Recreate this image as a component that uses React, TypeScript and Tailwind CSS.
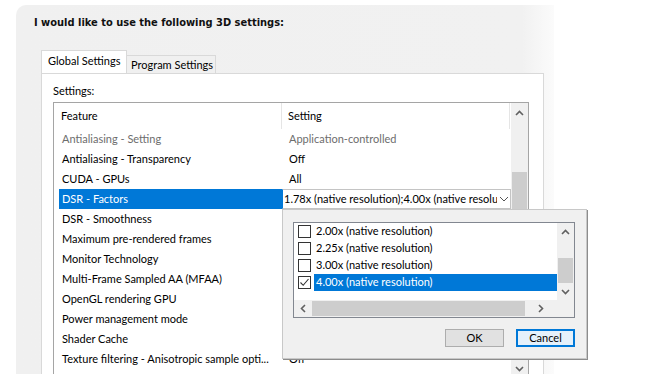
import React from "react";

type Row = { f: string; s: string; dim?: boolean; sel?: boolean };

const rows: Row[] = [
  { f: "Antialiasing - Setting", s: "Application-controlled", dim: true },
  { f: "Antialiasing - Transparency", s: "Off" },
  { f: "CUDA - GPUs", s: "All" },
  { f: "DSR - Factors", s: "", sel: true },
  { f: "DSR - Smoothness", s: "33%" },
  { f: "Maximum pre-rendered frames", s: "Use the 3D application setting" },
  { f: "Monitor Technology", s: "G-SYNC" },
  { f: "Multi-Frame Sampled AA (MFAA)", s: "Off" },
  { f: "OpenGL rendering GPU", s: "Auto-select" },
  { f: "Power management mode", s: "Optimal power" },
  { f: "Shader Cache", s: "On" },
  { f: "Texture filtering - Anisotropic sample opti...", s: "Off" },
  { f: "Texture filtering - Negative LOD bias", s: "Allow" },
];

const UpArrow = () => (
  <svg width="9" height="6" viewBox="0 0 9 6">
    <path d="M1 5 L4.5 1.5 L8 5" stroke="#606060" strokeWidth="1.6" fill="none" />
  </svg>
);
const DownArrow = () => (
  <svg width="9" height="6" viewBox="0 0 9 6">
    <path d="M1 1 L4.5 4.5 L8 1" stroke="#606060" strokeWidth="1.6" fill="none" />
  </svg>
);
const LeftArrow = () => (
  <svg width="6" height="9" viewBox="0 0 6 9">
    <path d="M5 1 L1.5 4.5 L5 8" stroke="#606060" strokeWidth="1.6" fill="none" />
  </svg>
);
const RightArrow = () => (
  <svg width="6" height="9" viewBox="0 0 6 9">
    <path d="M1 1 L4.5 4.5 L1 8" stroke="#606060" strokeWidth="1.6" fill="none" />
  </svg>
);

const items = [
  { t: "2.00x (native resolution)", c: false },
  { t: "2.25x (native resolution)", c: false },
  { t: "3.00x (native resolution)", c: false },
  { t: "4.00x (native resolution)", c: true, sel: true },
];

export default function App() {
  return (
    <div className="w-[664px] h-[374px] overflow-hidden bg-white relative pt-[5px] pl-[16px] font-[Lato,sans-serif] text-[11px] text-black">
      <div className="w-[538px] h-[369px] rounded-tl-[10px] bg-[linear-gradient(to_right,#f0f0f0_0%,#f1f1f1_94%,#fbfbfb_100%)] flex flex-col">
        <div className="pl-[18px] pt-[10px] leading-[16px] font-['DejaVu_Sans_Condensed','DejaVu_Sans',sans-serif] font-bold text-[11px] text-[#111] whitespace-nowrap">
          I would like to use the following 3D settings:
        </div>
        <div className="mt-[20px] ml-[25px] flex items-end h-[22px] relative z-10">
          <div className="w-[86px] h-[23px] border border-b-0 border-[#d9d9d9] bg-white pl-[6px] pt-[2px] leading-[16px] whitespace-nowrap">
            Global Settings
          </div>
          <div className="w-[89px] h-[18px] border border-l-0 border-b-0 border-[#d9d9d9] bg-[#f0f0f0] pl-[4px] leading-[18px] whitespace-nowrap">
            Program Settings
          </div>
        </div>
        <div className="ml-[25px] w-[503px] flex-1 border border-[#d9d9d9] bg-white pl-[11px] flex flex-col">
          <div className="pt-[9px] leading-[16px]">Settings:</div>
          <div className="mt-[3px] w-[476px] h-[276px] border border-[#a5a5a5] flex overflow-hidden shrink-0">
            <div className="w-[457px] flex flex-col overflow-hidden">
              <div className="h-[26px] flex shrink-0">
                <div className="w-[228px] border-r border-[#e5e5e5] pl-[7px] flex items-center">Feature</div>
                <div className="w-[228px] border-r border-[#e5e5e5] pl-[6px] flex items-center">Setting</div>
              </div>
              {rows.map((r) => (
                <div key={r.f} className="h-[20px] flex shrink-0">
                  <div className="w-[228px] pl-[5px] flex">
                    <div
                      className={
                        r.sel
                          ? "flex-1 pl-[3px] flex items-center bg-[#0078d7] text-white whitespace-nowrap overflow-hidden"
                          : r.dim
                          ? "flex-1 pl-[3px] flex items-center text-[#6d6d6d] whitespace-nowrap overflow-hidden"
                          : "flex-1 pl-[3px] flex items-center whitespace-nowrap overflow-hidden"
                      }
                    >
                      {r.f}
                    </div>
                  </div>
                  {r.sel ? (
                    <div className="w-[229px] flex items-center border border-[#c4c4c4] border-l-[#0078d7] bg-white">
                      <div className="w-[214px] pl-[1px] whitespace-nowrap overflow-hidden">
                        1.78x (native resolution);4.00x (native resolution)
                      </div>
                      <div className="flex-1 flex items-center justify-end pr-[1px]">
                        <svg width="10" height="6" viewBox="0 0 10 6">
                          <path d="M1 1 L5 5 L9 1" stroke="#555" strokeWidth="1" fill="none" />
                        </svg>
                      </div>
                    </div>
                  ) : (
                    <div
                      className={
                        r.dim
                          ? "w-[229px] pl-[7px] flex items-center text-[#6d6d6d] whitespace-nowrap overflow-hidden"
                          : "w-[229px] pl-[7px] flex items-center whitespace-nowrap overflow-hidden"
                      }
                    >
                      {r.s}
                    </div>
                  )}
                </div>
              ))}
            </div>
            <div className="w-[17px] bg-[#f0f0f0] flex flex-col">
              <div className="h-[20px] flex items-center justify-center">
                <UpArrow />
              </div>
              <div className="flex-1 flex flex-col">
                <div className="h-[49px]" />
                <div className="h-[130px] mx-[1px] bg-[#cdcdcd]" />
              </div>
              <div className="h-[17px] flex items-center justify-center">
                <DownArrow />
              </div>
            </div>
          </div>
        </div>
      </div>

      <div className="absolute left-[282px] top-[209px] w-[305px] h-[150px] bg-[#f0f0f0] border border-[#c8c8c8] shadow-[1px_1px_0_#8c8c8c] pl-[10px] pt-[12px] flex flex-col">
        <div className="w-[282px] h-[96px] border border-[#828790] bg-white flex flex-col">
          <div className="h-[77px] flex">
            <div className="w-[263px] flex flex-col">
              {items.map((it) => (
                <div key={it.t} className="h-[17px] flex items-center pl-[4px]">
                  <div className="w-[13px] h-[13px] border border-[#333] bg-white flex items-center justify-center shrink-0">
                    {it.c && (
                      <svg width="11" height="11" viewBox="0 0 11 11">
                        <path d="M1.5 5.5 L4.2 8.3 L9.5 2" stroke="#333" strokeWidth="1.1" fill="none" />
                      </svg>
                    )}
                  </div>
                  <div
                    className={
                      it.sel
                        ? "ml-[3px] flex-1 h-[17px] pl-[2px] flex items-center bg-[#0078d7] text-white"
                        : "ml-[3px] flex-1 h-[17px] pl-[2px] flex items-center"
                    }
                  >
                    {it.t}
                  </div>
                </div>
              ))}
            </div>
            <div className="flex-1 bg-[#f0f0f0] flex flex-col">
              <div className="h-[17px] flex items-center justify-center">
                <UpArrow />
              </div>
              <div className="flex-1 flex flex-col">
                <div className="h-[18px]" />
                <div className="h-[25px] mx-[1px] bg-[#cdcdcd]" />
              </div>
              <div className="h-[17px] flex items-center justify-center">
                <DownArrow />
              </div>
            </div>
          </div>
          <div className="flex-1 flex">
            <div className="w-[263px] bg-[#f0f0f0] flex items-center">
              <div className="w-[18px] flex items-center justify-center">
                <LeftArrow />
              </div>
              <div className="w-[213px] h-[15px] bg-[#cdcdcd]" />
              <div className="flex-1 flex items-center justify-center">
                <RightArrow />
              </div>
            </div>
            <div className="flex-1 bg-[#f0f0f0]" />
          </div>
        </div>
        <div className="mt-[11px] w-[282px] flex justify-end gap-[12px]">
          <div className="w-[59px] h-[18px] bg-[#e1e1e1] border border-[#adadad] flex items-center justify-center">
            OK
          </div>
          <div className="w-[59px] h-[18px] bg-[#e5f1fb] border-2 border-[#0078d7] flex items-center justify-center">
            Cancel
          </div>
        </div>
      </div>
    </div>
  );
}
